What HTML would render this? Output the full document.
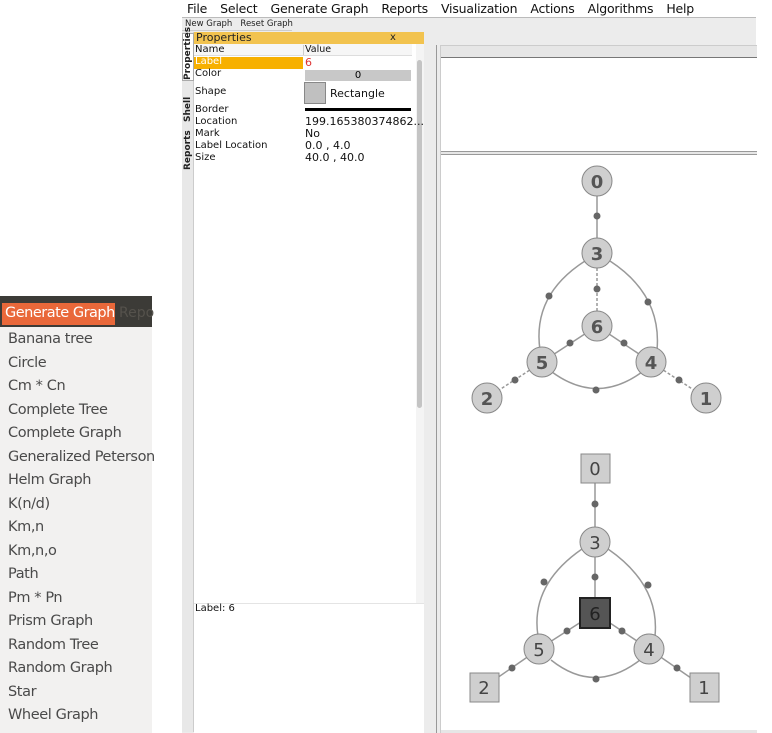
<!DOCTYPE html>
<html><head><style>
*{margin:0;padding:0;box-sizing:border-box}
body{width:772px;height:733px;background:#fff;position:relative;overflow:hidden;font-family:"DejaVu Sans","Liberation Sans",sans-serif}
.a{position:absolute}
.menu span{margin-right:13px}
.pm div{position:absolute;left:8px;font-size:14.5px;color:#4a4a4a;font-family:"DejaVu Sans",sans-serif;letter-spacing:-0.4px}
.pr{font-size:10px;color:#111;position:absolute;left:195px}
.pv{font-size:11px;color:#111;position:absolute;left:305px}
</style></head><body>
<div class="a" style="left:182px;top:17px;width:574px;height:716px;background:#ececec"></div>
<div class="a menu" style="left:187px;top:1px;font-size:12.5px;color:#111;white-space:nowrap;letter-spacing:-0.2px"><span>File</span><span>Select</span><span>Generate Graph</span><span>Reports</span><span>Visualization</span><span>Actions</span><span>Algorithms</span><span>Help</span></div>
<div class="a" style="left:182px;top:17px;width:574px;height:1px;background:#bbb"></div>
<div class="a" style="left:185px;top:19px;font-size:8.5px;color:#222;white-space:nowrap">New Graph&nbsp;&nbsp;&nbsp;Reset Graph</div>
<div class="a" style="left:182px;top:30px;width:110px;height:1px;background:#ccc"></div>
<div class="a" style="left:182px;top:32px;width:12px;height:700px;background:#e8e8e8;border-right:1px solid #ccc"></div>
<div class="a" style="left:182px;top:33px;width:12px;height:48px;background:#fff;border:1px solid #aaa"></div>
<div class="a" style="left:183px;top:80px;font-size:9px;font-weight:bold;transform:rotate(-90deg);transform-origin:0 0;white-space:nowrap;color:#222">Properties</div>
<div class="a" style="left:183px;top:122px;font-size:9px;font-weight:bold;transform:rotate(-90deg);transform-origin:0 0;white-space:nowrap;color:#222">Shell</div>
<div class="a" style="left:183px;top:170px;font-size:9px;font-weight:bold;transform:rotate(-90deg);transform-origin:0 0;white-space:nowrap;color:#222">Reports</div>
<div class="a" style="left:194px;top:32px;width:230px;height:12px;background:#f2c34f"></div>
<div class="a" style="left:196px;top:31px;font-size:11px;color:#222">Properties</div>
<div class="a" style="left:390px;top:32px;font-size:10px;color:#222">x</div>
<div class="a" style="left:194px;top:44px;width:222px;height:559px;background:#fff"></div>
<div class="a" style="left:416px;top:44px;width:8px;height:559px;background:#f4f4f4"></div>
<div class="a" style="left:417px;top:60px;width:5px;height:348px;background:#c4c4c4;border-radius:3px"></div>
<div class="a" style="left:194px;top:44px;width:218px;height:12px;background:#f6f6f6;border-bottom:1px solid #ddd"></div>
<div class="a" style="left:303px;top:45px;width:1px;height:10px;background:#ccc"></div>
<div class="pr" style="top:44px">Name</div><div class="pv" style="top:44px;font-size:9.5px">Value</div>
<div class="a" style="left:194px;top:57px;width:109px;height:12px;background:#f7b000"></div>
<div class="pr" style="top:56px;color:#fff">Label</div><div class="pv" style="top:56px;color:#d33">6</div>
<div class="pr" style="top:68px">Color</div>
<div class="a" style="left:305px;top:70px;width:106px;height:11px;background:#c8c8c8;font-size:10px;text-align:center;line-height:11px">0</div>
<div class="pr" style="top:86px">Shape</div>
<div class="a" style="left:304px;top:82px;width:22px;height:22px;background:#c0c0c0;border:1px solid #888"></div>
<div class="pv" style="left:330px;top:87px">Rectangle</div>
<div class="pr" style="top:104px">Border</div>
<div class="a" style="left:305px;top:108px;width:106px;height:3px;background:#000"></div>
<div class="pr" style="top:116px">Location</div><div class="pv" style="top:115px">199.165380374862...</div>
<div class="pr" style="top:128px">Mark</div><div class="pv" style="top:127px">No</div>
<div class="pr" style="top:140px">Label Location</div><div class="pv" style="top:139px">0.0 , 4.0</div>
<div class="pr" style="top:152px">Size</div><div class="pv" style="top:151px">40.0 , 40.0</div>
<div class="a" style="left:194px;top:603px;width:230px;height:130px;background:#fff;border-top:1px solid #e4e4e4"></div>
<div class="a" style="left:195px;top:603px;font-size:10px;color:#111">Label: 6</div>
<div class="a" style="left:436px;top:45px;width:1px;height:688px;background:#999"></div>
<div class="a" style="left:440px;top:45px;width:317px;height:688px;background:#e6e6e6;border-top:1px solid #ccc;border-left:1px solid #ccc"></div>
<div class="a" style="left:441px;top:57px;width:316px;height:95px;background:#fff;border-top:1px solid #777;border-bottom:1px solid #999"></div>
<div class="a" style="left:441px;top:154px;width:316px;height:576px;background:#fff;border-top:1px solid #999"></div>
<svg class="a" style="left:0;top:0" width="772" height="733" font-family="DejaVu Sans,sans-serif">
<g stroke="#999" stroke-width="1.5" fill="none">
<line x1="597" y1="181" x2="597" y2="253"/>
<line x1="597" y1="253" x2="597" y2="326" stroke-dasharray="3,2"/>
<line x1="597" y1="326" x2="542" y2="362"/><line x1="597" y1="326" x2="651" y2="362"/>
<line x1="542" y1="362" x2="487" y2="398" stroke-dasharray="3,2"/><line x1="651" y1="362" x2="706" y2="398" stroke-dasharray="3,2"/>
<path d="M585 261 Q532 295 540 350"/><path d="M610 261 Q662 295 657 350"/><path d="M552 372 Q597 405 642 372"/>
<line x1="595" y1="468" x2="595" y2="542"/><line x1="595" y1="542" x2="595" y2="613"/>
<line x1="595" y1="613" x2="539" y2="649"/><line x1="595" y1="613" x2="649" y2="649"/>
<line x1="539" y1="649" x2="484" y2="687"/><line x1="649" y1="649" x2="704" y2="687"/>
<path d="M582 549 Q530 585 538 636"/><path d="M608 549 Q660 585 655 636"/><path d="M551 660 Q595 695 640 660"/>
</g>
<g fill="#666">
<circle cx="597" cy="216" r="3.5"/><circle cx="597" cy="289" r="3.5"/><circle cx="549" cy="296" r="3.5"/><circle cx="648" cy="302" r="3.5"/><circle cx="570" cy="343" r="3.5"/><circle cx="624" cy="343" r="3.5"/><circle cx="515" cy="380" r="3.5"/><circle cx="679" cy="380" r="3.5"/><circle cx="596" cy="390" r="3.5"/>
<circle cx="595" cy="504" r="3.5"/><circle cx="595" cy="577" r="3.5"/><circle cx="544" cy="582" r="3.5"/><circle cx="648" cy="585" r="3.5"/><circle cx="567" cy="631" r="3.5"/><circle cx="622" cy="631" r="3.5"/><circle cx="512" cy="668" r="3.5"/><circle cx="677" cy="668" r="3.5"/><circle cx="596" cy="679" r="3.5"/>
</g>
<g fill="#cfcfcf" stroke="#888" stroke-width="1">
<circle cx="597" cy="181" r="15"/><circle cx="597" cy="253" r="15"/><circle cx="597" cy="326" r="15"/><circle cx="542" cy="362" r="15"/><circle cx="651" cy="362" r="15"/><circle cx="487" cy="398" r="15"/><circle cx="706" cy="398" r="15"/>
<rect x="581" y="454" width="29" height="29"/><circle cx="595" cy="542" r="15"/><circle cx="539" cy="649" r="15"/><circle cx="649" cy="649" r="15"/><rect x="470" y="673" width="29" height="29"/><rect x="690" y="673" width="29" height="29"/>
<rect x="580" y="598" width="30" height="30" fill="#555" stroke="#222" stroke-width="2"/>
</g>
<g fill="#555" font-size="18" font-weight="bold" text-anchor="middle">
<text x="597" y="188">0</text><text x="597" y="260">3</text><text x="597" y="333">6</text><text x="542" y="369">5</text><text x="651" y="369">4</text><text x="487" y="405">2</text><text x="706" y="405">1</text>
</g>
<g fill="#444" font-size="18" text-anchor="middle">
<text x="595" y="475">0</text><text x="595" y="549">3</text><text x="595" y="620" fill="#222">6</text><text x="539" y="656">5</text><text x="649" y="656">4</text><text x="484" y="694">2</text><text x="704" y="694">1</text>
</g>
</svg>
<div class="a" style="left:0;top:296px;width:152px;height:437px;background:#f2f1f0"></div>
<div class="a" style="left:0;top:296px;width:152px;height:31px;background:#3c3b37"></div>
<div class="a" style="left:2px;top:303px;width:113px;height:22px;background:#e9683a"></div>
<div class="a" style="left:5px;top:305px;font-size:14.5px;color:#fff;letter-spacing:-0.5px">Generate Graph</div>
<div class="a" style="left:119px;top:305px;font-size:14px;color:#55524c">Repo</div>
<div class="pm">
<div style="top:331px">Banana tree</div><div style="top:355px">Circle</div><div style="top:378px">Cm * Cn</div><div style="top:402px">Complete Tree</div><div style="top:425px">Complete Graph</div><div style="top:449px">Generalized Peterson</div><div style="top:472px">Helm Graph</div><div style="top:496px">K(n/d)</div><div style="top:519px">Km,n</div><div style="top:543px">Km,n,o</div><div style="top:566px">Path</div><div style="top:590px">Pm * Pn</div><div style="top:613px">Prism Graph</div><div style="top:637px">Random Tree</div><div style="top:660px">Random Graph</div><div style="top:684px">Star</div><div style="top:707px">Wheel Graph</div>
</div>
</body></html>
